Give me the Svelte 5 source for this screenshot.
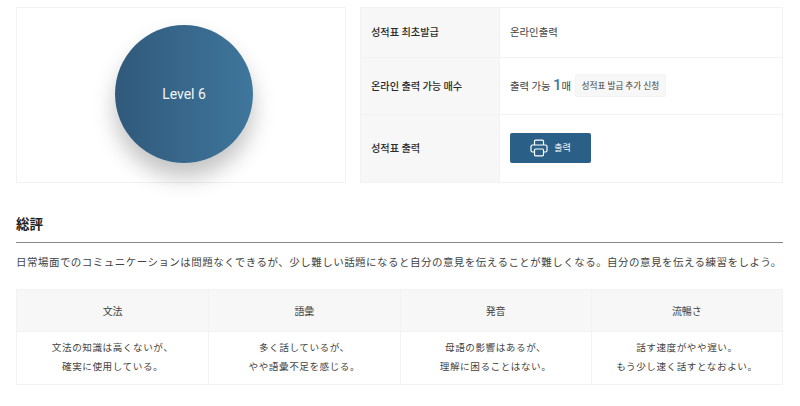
<script>
  const info = [
    { label: '성적표 최초발급', kind: 'text' },
    { label: '온라인 출력 가능 매수', kind: 'count' },
    { label: '성적표 출력', kind: 'print' }
  ];

  const scores = [
    { title: '文法', lines: ['文法の知識は高くないが、', '確実に使用している。'] },
    { title: '語彙', lines: ['多く話しているが、', 'やや語彙不足を感じる。'] },
    { title: '発音', lines: ['母語の影響はあるが、', '理解に困ることはない。'] },
    { title: '流暢さ', lines: ['話す速度がやや遅い。', 'もう少し速く話すとなおよい。'] }
  ];
</script>

<div class="page">
  <div class="top">
    <div class="level-card">
      <div class="circle">Level 6</div>
    </div>

    <div class="info">
      {#each info as row}
        <div class="row {row.kind}">
          <div class="label">{row.label}</div>
          <div class="value">
            {#if row.kind === 'text'}
              온라인출력
            {:else if row.kind === 'count'}
              <span>출력 가능 <b>1</b>매</span>
              <span class="extra">성적표 발급 추가 신청</span>
            {:else}
              <div class="print-btn">
                <svg width="18" height="18" viewBox="0 0 18 18" fill="none" stroke="#fff" stroke-width="1.2">
                  <path d="M4.5 6V2.2a1 1 0 0 1 1-1h7a1 1 0 0 1 1 1V6" />
                  <path d="M4.5 13H2.5a1.5 1.5 0 0 1-1.5-1.5V7.5A1.5 1.5 0 0 1 2.5 6h13A1.5 1.5 0 0 1 17 7.5v4a1.5 1.5 0 0 1-1.5 1.5h-2" />
                  <rect x="4.5" y="10" width="9" height="6.8" rx="1" />
                </svg>
                <span>출력</span>
              </div>
            {/if}
          </div>
        </div>
      {/each}
    </div>
  </div>

  <h2>総評</h2>
  <p class="summary">日常場面でのコミュニケーションは問題なくできるが、少し難しい話題になると自分の意見を伝えることが難しくなる。自分の意見を伝える練習をしよう。</p>

  <div class="scores">
    {#each scores as s}
      <div class="score">
        <div class="score-head">{s.title}</div>
        <div class="score-body">
          {#each s.lines as line}
            <div>{line}</div>
          {/each}
        </div>
      </div>
    {/each}
  </div>
</div>

<style>
  :global(body) {
    background: #fff;
    font-family: "Noto Sans CJK KR", "Noto Sans", sans-serif;
    color: #333;
  }

  .page {
    width: 767px;
    height: 406px;
    padding: 7px 17px 0 16px;
    overflow: hidden;
  }

  .top {
    display: flex;
    gap: 14px;
    height: 176px;
  }

  .level-card {
    width: 330px;
    box-sizing: border-box;
    border: 1px solid #f2f2f2;
    padding: 0 0 2px 6px;
    display: flex;
    align-items: center;
    justify-content: center;
  }

  .circle {
    width: 138px;
    height: 138px;
    border-radius: 50%;
    background: linear-gradient(90deg, #30597b, #3f769c);
    box-shadow: 0 14px 22px rgba(0, 0, 0, 0.24);
    color: #f2f6f9;
    font-family: Roboto, sans-serif;
    font-size: 14px;
    display: flex;
    align-items: center;
    justify-content: center;
  }

  .info {
    width: 423px;
    box-sizing: border-box;
    border: 1px solid #f2f2f2;
    display: flex;
    flex-direction: column;
  }

  .row {
    display: flex;
    border-bottom: 1px solid #f2f2f2;
  }

  .row:last-child {
    border-bottom: none;
  }

  .row.text { height: 49px; }
  .row.count { height: 56px; }
  .row.print { flex: 1; }

  .label {
    width: 139px;
    box-sizing: border-box;
    padding: 0 0 2px 10px;
    background: #f7f7f7;
    border-right: 1px solid #f2f2f2;
    font-size: 10.2px;
    font-weight: 500;
    color: #2a2a2a;
    display: flex;
    align-items: center;
  }

  .value {
    flex: 1;
    padding: 0 0 2px 10px;
    font-size: 10.4px;
    color: #444;
    display: flex;
    align-items: center;
    gap: 4px;
  }

  .value b {
    color: #3a7aa5;
    font-size: 15px;
    font-weight: 500;
    font-family: Roboto, sans-serif;
  }

  .extra {
    background: #f7f7f7;
    border: 1px solid #f2f2f2;
    border-radius: 2px;
    padding: 3px 5.5px;
    font-size: 8.7px;
    line-height: 15px;
  }

  .print-btn {
    width: 81px;
    height: 30px;
    background: #2a6088;
    border-radius: 2px;
    color: #fff;
    font-size: 9px;
    display: flex;
    align-items: center;
    justify-content: center;
    gap: 6px;
  }

  h2 {
    margin: 31px 0 0;
    font-size: 13.5px;
    line-height: 19px;
    height: 28px;
    font-weight: 700;
    color: #222;
    border-bottom: 1px solid #888;
    font-family: "Noto Sans CJK JP", sans-serif;
  }

  .summary {
    margin: 11px 0 0;
    font-family: "Noto Sans CJK JP", sans-serif;
    font-size: 10.5px;
    line-height: 16px;
    letter-spacing: 0.47px;
    color: #444;
    white-space: nowrap;
  }

  .scores {
    margin-top: 19px;
    display: grid;
    grid-template-columns: repeat(4, 1fr);
    border: 1px solid #f2f2f2;
    font-family: "Noto Sans CJK JP", sans-serif;
    font-size: 10px;
    color: #444;
    text-align: center;
  }

  .score {
    border-left: 1px solid #f2f2f2;
  }

  .score:first-child {
    border-left: none;
  }

  .score-head {
    height: 41px;
    line-height: 41px;
    background: #f7f7f7;
    border-bottom: 1px solid #f4f4f4;
  }

  .score-body {
    height: 52px;
    box-sizing: border-box;
    padding-top: 6px;
    font-size: 9.6px;
    line-height: 19px;
    letter-spacing: 0.55px;
  }
</style>
